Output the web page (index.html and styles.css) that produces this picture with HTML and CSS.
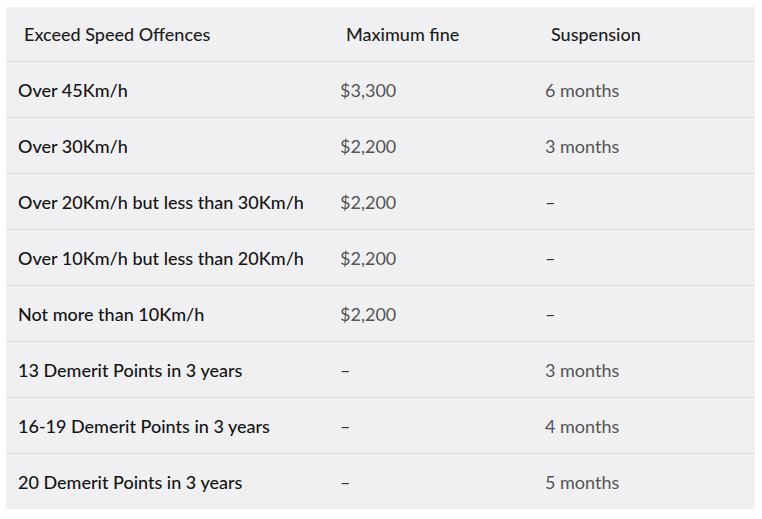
FILE: index.html
```html
<!DOCTYPE html>
<html>
<head>
<meta charset="utf-8">
<link rel="stylesheet" href="styles.css">
</head>
<body>
<table class="fines">
  <thead>
    <tr>
      <th class="c1">Exceed Speed Offences</th>
      <th class="c2">Maximum fine</th>
      <th class="c3">Suspension</th>
    </tr>
  </thead>
  <tbody>
    <tr><td class="name">Over 45Km/h</td><td>$3,300</td><td>6 months</td></tr>
    <tr><td class="name">Over 30Km/h</td><td>$2,200</td><td>3 months</td></tr>
    <tr><td class="name">Over 20Km/h but less than 30Km/h</td><td>$2,200</td><td class="dash">–</td></tr>
    <tr><td class="name">Over 10Km/h but less than 20Km/h</td><td>$2,200</td><td class="dash">–</td></tr>
    <tr><td class="name">Not more than 10Km/h</td><td>$2,200</td><td class="dash">–</td></tr>
    <tr><td class="name">13 Demerit Points in 3 years</td><td class="dash">–</td><td>3 months</td></tr>
    <tr><td class="name">16-19 Demerit Points in 3 years</td><td class="dash">–</td><td>4 months</td></tr>
    <tr><td class="name">20 Demerit Points in 3 years</td><td class="dash">–</td><td>5 months</td></tr>
  </tbody>
</table>
</body>
</html>
```
FILE: styles.css
```css
html, body {
  margin: 0;
  padding: 0;
  background: #ffffff;
}
body {
  padding: 7px 0 0 6px;
  font-family: Lato, "Open Sans", sans-serif;
}
.fines {
  width: 749px;
  border-collapse: collapse;
  background: #f0f0f2;
  table-layout: fixed;
}
.fines th, .fines td {
  text-align: left;
  vertical-align: middle;
  padding: 0 12px;
  font-size: 18px;
  border-bottom: 1px solid #dadadc;
}
.fines th {
  height: 54px;
  font-weight: 500;
  color: #1e1e1e;
  padding-left: 18px;
}
.fines td {
  height: 55px;
  color: #555555;
}
.fines tbody tr:last-child td {
  border-bottom: none;
}
.fines .c1 { width: 292px; }
.fines .c2 { width: 175px; }
.fines td.name {
  color: #151515;
  font-weight: 500;
}
.fines td.dash {
  color: #333333;
}
```
